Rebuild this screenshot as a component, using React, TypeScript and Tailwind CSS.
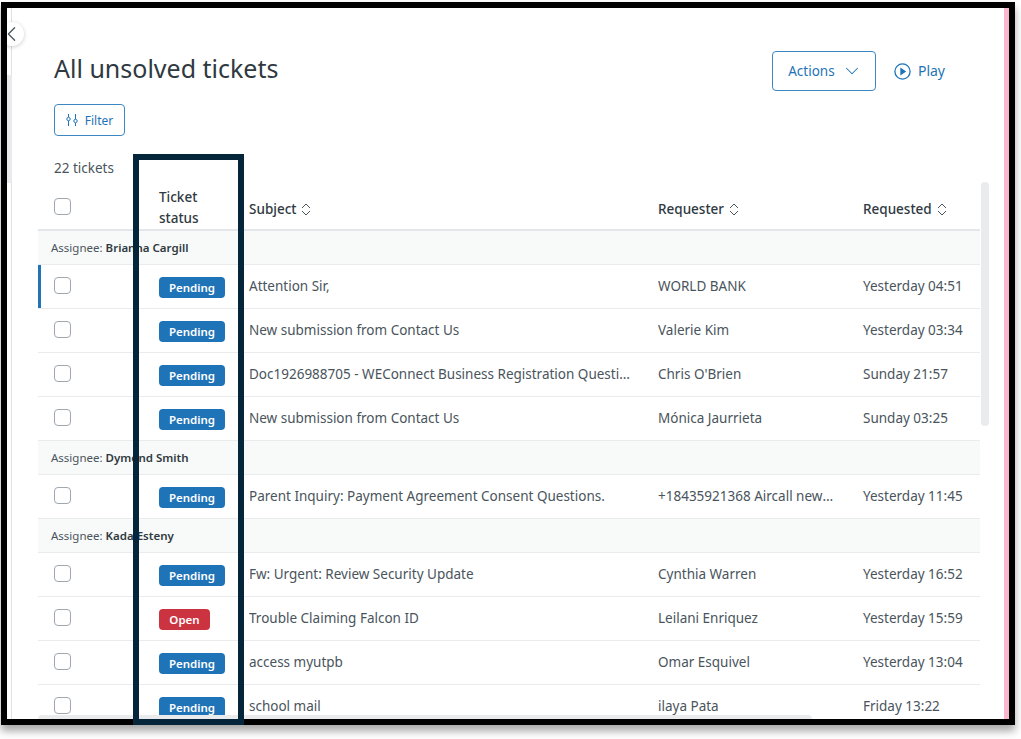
import React from "react";
import { ChevronDown, ChevronLeft } from "lucide-react";

interface Ticket {
  status: "Pending" | "Open";
  subject: string;
  requester: string;
  requested: string;
  active?: boolean;
}

interface Group {
  assignee: string;
  tickets: Ticket[];
}

const groups: Group[] = [
  {
    assignee: "Brianna Cargill",
    tickets: [
      { status: "Pending", subject: "Attention Sir,", requester: "WORLD BANK", requested: "Yesterday 04:51", active: true },
      { status: "Pending", subject: "New submission from Contact Us", requester: "Valerie Kim", requested: "Yesterday 03:34" },
      { status: "Pending", subject: "Doc1926988705 - WEConnect Business Registration Questions and Answers", requester: "Chris O'Brien", requested: "Sunday 21:57" },
      { status: "Pending", subject: "New submission from Contact Us ", requester: "Mónica Jaurrieta", requested: "Sunday 03:25" },
    ],
  },
  {
    assignee: "Dymond Smith",
    tickets: [
      { status: "Pending", subject: "Parent Inquiry: Payment Agreement Consent Questions.", requester: "+18435921368 Aircall new number", requested: "Yesterday 11:45" },
    ],
  },
  {
    assignee: "Kada Esteny",
    tickets: [
      { status: "Pending", subject: "Fw: Urgent: Review Security Update", requester: "Cynthia Warren", requested: "Yesterday 16:52" },
      { status: "Open", subject: "Trouble Claiming Falcon ID", requester: "Leilani Enriquez", requested: "Yesterday 15:59" },
      { status: "Pending", subject: "access myutpb", requester: "Omar Esquivel", requested: "Yesterday 13:04" },
      { status: "Pending", subject: "school mail", requester: "ilaya Pata", requested: "Friday 13:22" },
    ],
  },
];

const columns = "grid grid-cols-[121px_90px_409px_205px_1fr]";

const SortIcon = () => (
  <svg width="10" height="13" viewBox="0 0 10 13" fill="none" stroke="#49545c" strokeWidth="1" className="ml-[5px] shrink-0">
    <path d="M1 5 L5 1 L9 5" />
    <path d="M1 8 L5 12 L9 8" />
  </svg>
);

const FilterIcon = () => (
  <svg width="12" height="14" viewBox="0 0 12 14" fill="none" stroke="#1f73b7" strokeWidth="1">
    <path d="M2.5 1v3M2.5 8v5M9.5 1v5M9.5 10v3" />
    <circle cx="2.5" cy="6" r="1.7" />
    <circle cx="9.5" cy="8" r="1.7" />
  </svg>
);

const PlayIcon = () => (
  <svg width="17" height="17" viewBox="0 0 17 17" fill="none">
    <circle cx="8.5" cy="8.5" r="7.6" stroke="#1f73b7" strokeWidth="1.3" />
    <path d="M6.3 4.6 L12.2 8.5 L6.3 12.4 Z" fill="#1f73b7" />
  </svg>
);

const Checkbox = () => (
  <div className="h-[17px] w-[17px] rounded-[4px] border border-[#a0a8af] bg-white" />
);

const Badge = ({ status }: { status: Ticket["status"] }) => (
  <span
    className={`mt-[2px] inline-flex h-[21px] items-center justify-center rounded-[4px] text-[11.5px] font-semibold text-white ${
      status === "Open" ? "w-[51px] bg-[#cc3340]" : "w-[66px] bg-[#1f73b7]"
    }`}
  >
    {status}
  </span>
);

export default function App() {
  return (
    <div className="relative h-[739px] w-[1021px] overflow-hidden bg-white font-['Noto_Sans',sans-serif] text-[13.5px] text-[#49545c]">
      {/* screenshot frame */}
      <div className="relative ml-[1px] mt-[2px] flex h-[723px] w-[1014px] overflow-hidden border-[6px] border-black bg-white shadow-[0_6px_8px_rgba(0,0,0,0.35)]">
        <div className="relative w-[5px] shrink-0 border-r border-[#dfe2e4]">
          <div className="absolute left-0 top-[67px] h-[108px] w-[5px] bg-[#e8eaec]" />
        </div>

        <main className="relative flex-1 overflow-hidden">
          <div className="flex h-[96px] items-start justify-between pl-[42px] pr-[59px]">
            <h1 className="mt-[41px] text-[25px] leading-[38px] text-[#2f3941]">All unsolved tickets</h1>
            <div className="mt-[43px] flex items-center text-[#1f73b7]">
              <button className="flex h-[40px] w-[104px] items-center justify-center gap-[6px] rounded-[4px] border border-[#3d87c2] pl-[3px]">
                Actions
                <ChevronDown size={22} strokeWidth={1.1} />
              </button>
              <span className="ml-[18px] flex items-center gap-[7px] text-[14px]">
                <PlayIcon />
                <span className="-mt-[1px]">Play</span>
              </span>
            </div>
          </div>

          <div className="pl-[42px]">
            <button className="flex h-[32px] w-[71px] items-center justify-center gap-[7px] rounded-[4px] border border-[#3d87c2] text-[12px] text-[#1f73b7]">
              <FilterIcon />
              <span className="mt-[1px]">Filter</span>
            </button>
            <p className="mt-[21px] leading-[22px]">22 tickets</p>
          </div>

          <section className="relative ml-[26px] mt-[5px] w-[942px]">
            <div className={`${columns} h-[47px] items-center border-b-2 border-[#e4e7e9] font-medium text-[#2f3941]`}>
              <div className="pl-[16px]">
                <Checkbox />
              </div>
              <div className="mt-[2px] leading-[21px]">
                Ticket
                <br />
                status
              </div>
              <div className="mt-[6px] flex items-center">
                Subject
                <SortIcon />
              </div>
              <div className="mt-[6px] flex items-center">
                Requester
                <SortIcon />
              </div>
              <div className="mt-[6px] flex items-center">
                Requested
                <SortIcon />
              </div>
            </div>

            {groups.map((group) => (
              <div key={group.assignee}>
                <div className="flex h-[34px] items-center border-b border-[#e9ebed] bg-[#f8f9f9] pl-[13px] text-[11.5px]">
                  Assignee:&nbsp;<span className="font-semibold text-[#2f3941]">{group.assignee}</span>
                </div>
                {group.tickets.map((ticket) => (
                  <div key={ticket.subject} className={`${columns} relative h-[44px] items-center border-b border-[#e9ebed]`}>
                    {ticket.active && <div className="absolute bottom-0 left-0 top-0 w-[3px] bg-[#1f73b7]" />}
                    <div className="-mt-[3px] pl-[16px]">
                      <Checkbox />
                    </div>
                    <div>
                      <Badge status={ticket.status} />
                    </div>
                    <div className="truncate pr-[27px]">{ticket.subject}</div>
                    <div className="truncate pr-[27px]">{ticket.requester}</div>
                    <div className="truncate">{ticket.requested}</div>
                  </div>
                ))}
              </div>
            ))}
          </section>

          {/* scrollbars */}
          <div className="absolute left-[969px] top-[174px] h-[244px] w-[8px] rounded-[4px] bg-[#e9ebed]" />
          <div className="absolute bottom-0 left-[26px] h-[4px] w-[774px] rounded-t-[4px] bg-[#e9ebed]" />
        </main>

        <div className="w-[5px] shrink-0 bg-[#f8b6cf]" />

        {/* collapse toggle, cut by the frame */}
        <div className="absolute -left-[7px] top-[14px] flex h-[24px] w-[24px] items-center justify-center rounded-full bg-white shadow-[0_1px_4px_rgba(0,0,0,0.2)]">
          <ChevronLeft size={26} strokeWidth={1.2} className="-ml-[1px] text-[#49545c]" />
        </div>
      </div>

      {/* highlight drawn over the column */}
      <div className="absolute left-[133px] top-[154px] h-[571px] w-[111px] border-[6px] border-[#05263a]" />
    </div>
  );
}
